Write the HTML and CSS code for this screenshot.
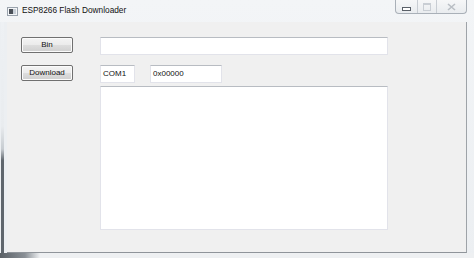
FILE: index.html
```html
<!DOCTYPE html>
<html>
<head>
<meta charset="utf-8">
<link rel="stylesheet" href="styles.css">
</head>
<body>
<div class="window">
  <div class="titlebar">
    <svg class="app-icon" width="11" height="9" viewBox="0 0 11 9">
      <rect x="0.5" y="0.5" width="10" height="8" fill="#f4f6f8" stroke="#9aa3ad"/>
      <rect x="2" y="2" width="4" height="5" fill="#4a5058"/>
      <rect x="6" y="2" width="3" height="5" fill="#c9d0d8"/>
    </svg>
    <span class="title">ESP8266 Flash Downloader</span>
    <div class="caption-buttons">
      <div class="cap cap-min"><span class="min-glyph"></span></div>
      <div class="cap cap-max"><span class="max-glyph"></span></div>
      <div class="cap cap-close">
        <svg width="9" height="8" viewBox="0 0 9 8">
          <path d="M1 1 L8 7 M8 1 L1 7" stroke="#b9bec4" stroke-width="1.6" fill="none"/>
        </svg>
      </div>
    </div>
  </div>
  <div class="middle">
    <div class="frame-left"></div>
    <div class="client">
      <div class="grid">
        <button class="btn">Bin</button>
        <div class="field field-wide"></div>
        <button class="btn btn-dl">Download</button>
        <div class="row2">
          <div class="field field-com">COM1</div>
          <div class="field field-addr">0x00000</div>
        </div>
        <div class="spacer"></div>
        <div class="field textarea"></div>
      </div>
    </div>
    <div class="frame-right"></div>
  </div>
  <div class="frame-bottom"></div>
</div>
</body>
</html>
```
FILE: styles.css
```css
html, body {
  margin: 0;
  padding: 0;
  width: 474px;
  height: 258px;
  overflow: hidden;
  background: #eef1f4;
  font-family: "Liberation Sans", Arial, sans-serif;
}
.window {
  width: 474px;
  height: 258px;
  display: flex;
  flex-direction: column;
  background: linear-gradient(180deg, #f3f5f7 0%, #eceff2 100%);
}
.titlebar {
  height: 22px;
  flex: 0 0 22px;
  display: flex;
  align-items: flex-start;
  position: relative;
}
.app-icon {
  margin: 7px 0 0 7px;
}
.title {
  margin: 5px 0 0 4px;
  font-size: 8.3px;
  color: #111;
  line-height: 11px;
}
.caption-buttons {
  position: absolute;
  top: 0;
  left: 395px;
  width: 72px;
  height: 14px;
  display: flex;
  border: 1px solid #a9b0b8;
  border-top: none;
  border-radius: 0 0 4px 4px;
  background: linear-gradient(180deg, #f6f7f8 0%, #e9ecef 100%);
  box-sizing: border-box;
}
.cap {
  display: flex;
  align-items: center;
  justify-content: center;
  height: 13px;
}
.cap-min { width: 21px; border-right: 1px solid #c8cdd3; }
.cap-max { width: 18px; border-right: 1px solid #c8cdd3; }
.cap-close { flex: 1; }
.min-glyph {
  width: 7px;
  height: 2px;
  margin-top: 5px;
  border: 1px solid #5a6068;
  background: #fff;
}
.max-glyph {
  width: 6px;
  height: 5px;
  border: 1px solid #c9ced4;
  border-top-width: 2px;
}
.middle {
  flex: 1;
  display: flex;
}
.frame-left {
  width: 7px;
  background: linear-gradient(180deg, #eef1f4 0%, #e9ecef 45%, #c7ccd1 55%, #5f666d 60%, #5f666d 100%);
  background-size: 3px 100%;
  background-repeat: no-repeat;
  background-position: 1px 0;
  background-color: #eceff2;
}
.client {
  width: 460px;
  background: #f0f0f0;
  border-right: 1px solid #9ea3a8;
  border-bottom: 1px solid #8f949a;
  box-sizing: border-box;
  padding: 15px 0 0 14px;
}
.frame-right {
  flex: 1;
}
.frame-bottom {
  height: 5px;
  flex: 0 0 5px;
  background: linear-gradient(90deg, #5a6066 0px, #8a9096 25px, #eef0f2 40px);
}
.grid {
  display: grid;
  grid-template-columns: 52px 288px;
  column-gap: 27px;
  grid-template-rows: 18px 18px 137px;
  row-gap: 10px;
}
.btn {
  margin: 0;
  padding: 0;
  width: 52px;
  height: 16px;
  border: 1px solid #707070;
  border-radius: 2px;
  background: linear-gradient(180deg, #f4f4f4 0%, #ebebeb 48%, #dddddd 52%, #cfcfcf 100%);
  font-family: "Liberation Sans", Arial, sans-serif;
  font-size: 8px;
  color: #111;
  line-height: 14px;
  box-sizing: border-box;
  box-shadow: inset 0 0 0 1px #fbfbfb;
}
.field {
  background: #fff;
  border: 1px solid #e2e3ea;
  border-top-color: #b8bcc2;
  box-sizing: border-box;
  height: 18px;
  font-size: 8px;
  color: #111;
  line-height: 16px;
  padding-left: 2px;
}
.row2 {
  display: flex;
  gap: 15px;
}
.field-com { width: 35px; }
.field-addr { width: 72px; }
.grid .spacer { grid-column: 1; grid-row: 3; }
.grid .textarea {
  grid-column: 2;
  grid-row: 3;
  margin-top: -7px;
  height: 144px;
}
```
